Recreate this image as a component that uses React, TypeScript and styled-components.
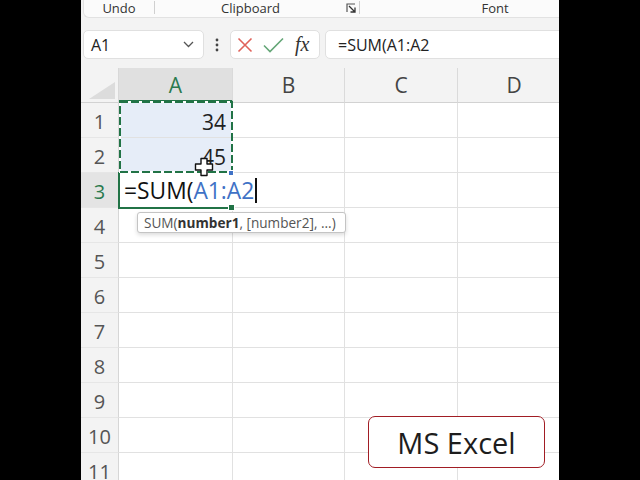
import React from "react";
import styled, { createGlobalStyle } from "styled-components";

const GREEN = "#217346";
const GRID = "#e1e1e1";

const GlobalStyle = createGlobalStyle`
  html, body { margin: 0; padding: 0; background: #000; }
  body { font-family: "Open Sans", "Noto Sans", Arial, sans-serif; }
  * { box-sizing: border-box; }
`;

const Screen = styled.div`
  width: 640px;
  height: 480px;
  background: #000;
  display: flex;
  overflow: hidden;
`;

const Window = styled.main`
  position: relative;
  margin-left: 81px;
  width: 478px;
  height: 480px;
  background: #f3f3f3;
  overflow: hidden;
  display: flex;
  flex-direction: column;
`;

/* ribbon group labels */
const Ribbon = styled.div`
  display: flex;
  flex: none;
  width: 560px;
  height: 18px;
  margin-left: 2px;
  padding-top: 1px;
  background: #fbfbfb;
  border-bottom: 1px solid #e2e2e2;
  border-left: 1px solid #e2e2e2;
  border-bottom-left-radius: 6px;
  font-size: 13px;
  line-height: 14px;
  color: #333;
`;

const RibbonGroup = styled.div<{ $width: number }>`
  width: ${(p) => p.$width}px;
  flex: none;
  display: flex;
  align-items: flex-start;
`;

const GroupLabel = styled.span`
  flex: 1;
  text-align: center;
  white-space: nowrap;
`;

const GroupDivider = styled.div`
  width: 1px;
  height: 13px;
  flex: none;
  background: #d0d0d0;
`;

const Launcher = styled.svg`
  margin: 2px 3px 0 0;
  flex: none;
`;

/* formula bar */
const FormulaBar = styled.div`
  display: flex;
  flex: none;
  height: 29px;
  margin-top: 12px;
  padding-left: 2px;
`;

const NameBox = styled.div`
  width: 121px;
  flex: none;
  display: flex;
  align-items: center;
  justify-content: space-between;
  padding: 0 9px 0 7px;
  background: #fff;
  border: 1px solid #e0e0e0;
  border-radius: 5px;
  font-size: 16px;
  color: #222;
`;

const MoreHandle = styled.div`
  width: 26px;
  flex: none;
  display: flex;
  align-items: center;
  justify-content: center;
`;

const EditButtons = styled.div`
  width: 90px;
  flex: none;
  display: flex;
  align-items: center;
  padding-left: 6px;
  background: #fff;
  border: 1px solid #e0e0e0;
  border-radius: 5px;
`;

const Fx = styled.span`
  margin-left: 11px;
  font-family: "Liberation Serif", "DejaVu Serif", serif;
  font-style: italic;
  font-size: 20px;
  color: #333;
`;

const FormulaInput = styled.div`
  width: 260px;
  flex: none;
  margin-left: 5px;
  display: flex;
  align-items: center;
  padding-left: 12px;
  background: #fff;
  border: 1px solid #e0e0e0;
  border-radius: 5px;
  font-size: 16px;
  color: #222;
`;

/* sheet grid */
const Sheet = styled.div<{ $cols: string }>`
  position: relative;
  margin-top: 9px;
  display: grid;
  grid-template-columns: ${(p) => p.$cols};
  grid-auto-rows: 35px;
`;

const Corner = styled.div`
  display: flex;
  align-items: flex-end;
  justify-content: flex-end;
  padding: 0 3px 3px 0;
  border-bottom: 1px solid #d2d2d2;
  border-right: 1px solid #d8d8d8;
`;

const ColHeader = styled.div<{ $active?: boolean }>`
  display: flex;
  align-items: center;
  justify-content: center;
  font-size: 21px;
  color: ${(p) => (p.$active ? "#2b7a4e" : "#444")};
  background: ${(p) => (p.$active ? "#e0e0e0" : "transparent")};
  border-right: 1px solid #dadada;
  border-bottom: ${(p) => (p.$active ? `3px solid ${GREEN}` : "1px solid #d2d2d2")};
  padding-top: ${(p) => (p.$active ? "2px" : "0")};
`;

const RowHeader = styled.div<{ $active?: boolean }>`
  display: flex;
  align-items: center;
  justify-content: center;
  padding-top: 3px;
  font-size: 20px;
  color: ${(p) => (p.$active ? "#2b7a4e" : "#555")};
  background: ${(p) => (p.$active ? "#e4e4e4" : "#f3f3f3")};
  border-right: 1px solid #d6d6d6;
  border-bottom: 1px solid #e6e6e6;
`;

const Cell = styled.div<{ $selected?: boolean }>`
  display: flex;
  align-items: center;
  justify-content: flex-end;
  padding: 3px 6px 0 0;
  font-size: 21px;
  color: #1f1f1f;
  background: ${(p) => (p.$selected ? "#e6edf8" : "#fff")};
  border-right: 1px solid ${GRID};
  border-bottom: 1px solid ${GRID};
`;

const EditorCell = styled(Cell)`
  position: relative;
  z-index: 3;
  justify-content: flex-start;
  padding: 1px 0 0 5px;
  overflow: visible;
`;

const EditText = styled.div`
  display: flex;
  align-items: center;
  white-space: nowrap;
  padding-right: 4px;
  background: #fff;
  font-size: 22.8px;
  color: #111;
`;

const Ref = styled.span`
  color: #3f72c6;
`;

const Caret = styled.span`
  display: inline-block;
  width: 2px;
  height: 25px;
  margin-left: 1px;
  background: #111;
`;

/* overlays on the grid */
const ActiveFrame = styled.div`
  position: absolute;
  left: 37px;
  top: 104px;
  width: 116px;
  height: 37px;
  border-left: 2px solid ${GREEN};
  border-bottom: 2px solid ${GREEN};
  z-index: 4;
  pointer-events: none;
`;

const Marquee = styled.svg`
  position: absolute;
  left: 38px;
  top: 33px;
  z-index: 5;
`;

const Handle = styled.div<{ $color: string; $left: number; $top: number; $size: number }>`
  position: absolute;
  left: ${(p) => p.$left}px;
  top: ${(p) => p.$top}px;
  width: ${(p) => p.$size}px;
  height: ${(p) => p.$size}px;
  background: ${(p) => p.$color};
  border: 1px solid #fff;
  z-index: 6;
`;

const Tooltip = styled.div`
  position: absolute;
  left: 56px;
  top: 144px;
  height: 21px;
  display: flex;
  align-items: center;
  padding: 0 9px 0 6px;
  background: #fff;
  border: 1px solid #c4c4c4;
  border-radius: 3px;
  box-shadow: 0 2px 4px rgba(0, 0, 0, 0.14);
  font-size: 13.6px;
  color: #555;
  white-space: nowrap;
  z-index: 7;

  b {
    color: #333;
  }
`;

const Pointer = styled.svg`
  position: absolute;
  left: 113px;
  top: 89px;
  z-index: 8;
`;

const Badge = styled.div`
  position: absolute;
  left: 287px;
  top: 416px;
  width: 177px;
  height: 52px;
  display: flex;
  align-items: center;
  justify-content: center;
  background: #fff;
  border: 1.5px solid #a11d24;
  border-radius: 7px;
  font-size: 29px;
  color: #1d1d1d;
  z-index: 10;
`;

const columns = [
  { name: "A", width: 114 },
  { name: "B", width: 112 },
  { name: "C", width: 113 },
  { name: "D", width: 113 },
];

const values: Record<string, string> = { A1: "34", A2: "45" };
const rows = Array.from({ length: 11 }, (_, i) => i + 1);

const App = () => {
  const cols = `38px ${columns.map((c) => `${c.width}px`).join(" ")}`;

  return (
    <Screen>
      <GlobalStyle />
      <Window>
        <Ribbon>
          <RibbonGroup $width={70}>
            <GroupLabel>Undo</GroupLabel>
          </RibbonGroup>
          <GroupDivider />
          <RibbonGroup $width={204}>
            <GroupLabel>Clipboard</GroupLabel>
            <Launcher width="10" height="10" viewBox="0 0 10 10">
              <path d="M1 9V1h8" fill="none" stroke="#555" strokeWidth="1.2" />
              <path d="M3 3l5.5 5.5M9 4.5V9H4.5" fill="none" stroke="#333" strokeWidth="1.3" />
            </Launcher>
          </RibbonGroup>
          <GroupDivider />
          <RibbonGroup $width={270}>
            <GroupLabel>Font</GroupLabel>
          </RibbonGroup>
        </Ribbon>

        <FormulaBar>
          <NameBox>
            A1
            <svg width="11" height="7" viewBox="0 0 11 7">
              <path d="M1 1l4.5 4.5L10 1" fill="none" stroke="#555" strokeWidth="1.3" />
            </svg>
          </NameBox>
          <MoreHandle>
            <svg width="4" height="14" viewBox="0 0 4 14">
              <circle cx="2" cy="2" r="1.4" fill="#444" />
              <circle cx="2" cy="7" r="1.4" fill="#444" />
              <circle cx="2" cy="12" r="1.4" fill="#444" />
            </svg>
          </MoreHandle>
          <EditButtons>
            <svg width="16" height="16" viewBox="0 0 16 16">
              <path d="M1.5 1.5l13 13M14.5 1.5l-13 13" stroke="#e0625a" strokeWidth="1.6" />
            </svg>
            <svg width="21" height="16" viewBox="0 0 21 16" style={{ marginLeft: 10 }}>
              <path d="M1 8.5l6 6L20 1.5" fill="none" stroke="#64a677" strokeWidth="1.6" />
            </svg>
            <Fx>fx</Fx>
          </EditButtons>
          <FormulaInput>=SUM(A1:A2</FormulaInput>
        </FormulaBar>

        <Sheet $cols={cols}>
          <Corner>
            <svg width="26" height="17" viewBox="0 0 26 17">
              <polygon points="26,0 26,17 0,17" fill="#dcdcdc" />
            </svg>
          </Corner>
          {columns.map((c) => (
            <ColHeader key={c.name} $active={c.name === "A"}>
              {c.name}
            </ColHeader>
          ))}

          {rows.map((r) => (
            <React.Fragment key={r}>
              <RowHeader $active={r === 3}>{r}</RowHeader>
              {columns.map((c) => {
                const id = `${c.name}${r}`;
                if (id === "A3") {
                  return (
                    <EditorCell key={id}>
                      <EditText>
                        =SUM(<Ref>A1:A2</Ref>
                        <Caret />
                      </EditText>
                    </EditorCell>
                  );
                }
                return (
                  <Cell key={id} $selected={id === "A1" || id === "A2"}>
                    {values[id]}
                  </Cell>
                );
              })}
            </React.Fragment>
          ))}

          <ActiveFrame />
          <Marquee width="114" height="72" viewBox="0 0 114 72">
            <rect x="1" y="1" width="112" height="70" fill="none" stroke="#fff" strokeWidth="2" />
            <rect
              x="1"
              y="1"
              width="112"
              height="70"
              fill="none"
              stroke={GREEN}
              strokeWidth="2"
              strokeDasharray="8 3"
            />
          </Marquee>
          <Handle $color="#3f72c6" $left={147} $top={102} $size={6} />
          <Handle $color={GREEN} $left={147} $top={136} $size={7} />

          <Tooltip>
            SUM(<b>number1</b>, [number2], ...)
          </Tooltip>

          <Pointer width="20" height="20" viewBox="0 0 20 20">
            <path
              d="M7 1.5h6v5.5h5.5v6H13v5.5H7V13H1.5V7H7z"
              fill="#fff"
              stroke="#111"
              strokeWidth="1.4"
              strokeLinejoin="round"
            />
          </Pointer>
        </Sheet>

        <Badge>MS Excel</Badge>
      </Window>
    </Screen>
  );
};

export default App;
